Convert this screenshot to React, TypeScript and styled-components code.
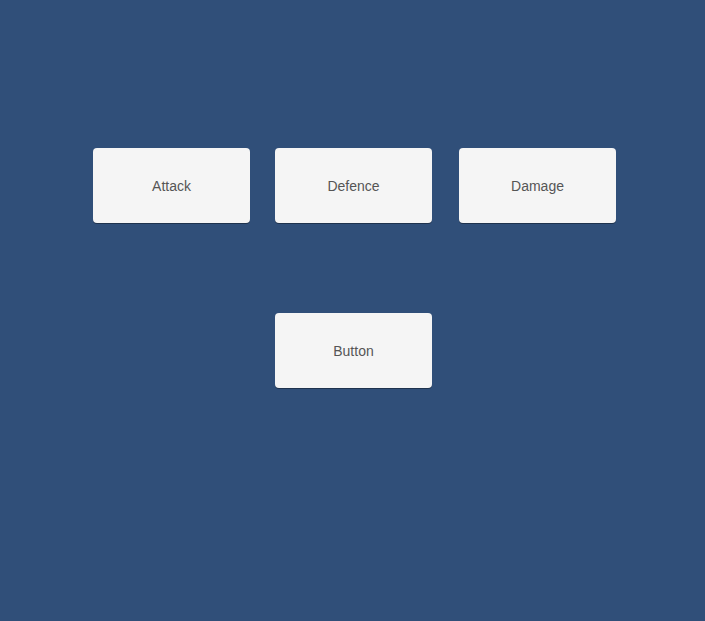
import styled, { createGlobalStyle } from "styled-components";

const GlobalStyle = createGlobalStyle`
  html, body {
    margin: 0;
    padding: 0;
    background: #304f79;
  }
  body {
    font-family: "Liberation Sans", Arial, sans-serif;
  }
`;

const Screen = styled.div`
  width: 705px;
  height: 621px;
  background: #304f79;
  box-sizing: border-box;
  padding: 148px 0 0 93px;
  display: flex;
  flex-direction: column;
  gap: 90px;
`;

const Row = styled.div<{ $indent?: number }>`
  display: flex;
  margin-left: ${(p) => p.$indent ?? 0}px;
`;

const GameButton = styled.button<{ $gap?: number }>`
  width: 157px;
  height: 75px;
  margin-left: ${(p) => p.$gap ?? 0}px;
  padding: 0;
  border: none;
  border-radius: 4px;
  background: #f5f5f5;
  box-shadow: 0 1px 0 rgba(0, 0, 0, 0.35);
  font-family: "Liberation Sans", Arial, sans-serif;
  font-size: 14px;
  color: #555555;
  display: flex;
  align-items: center;
  justify-content: center;
  cursor: pointer;
`;

export default function App() {
  return (
    <>
      <GlobalStyle />
      <Screen>
        <Row>
          <GameButton>Attack</GameButton>
          <GameButton $gap={25}>Defence</GameButton>
          <GameButton $gap={27}>Damage</GameButton>
        </Row>
        <Row $indent={182}>
          <GameButton>Button</GameButton>
        </Row>
      </Screen>
    </>
  );
}
